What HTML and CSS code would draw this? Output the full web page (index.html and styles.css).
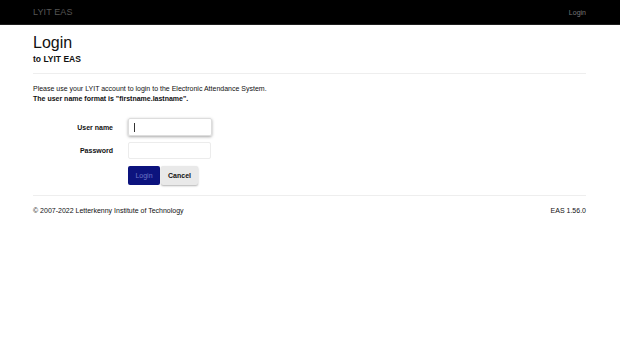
FILE: index.html
```html
<!DOCTYPE html>
<html>
<head>
<meta charset="utf-8">
<link rel="stylesheet" href="styles.css">
</head>
<body>
<nav class="navbar">
  <span class="brand">LYIT EAS</span>
  <span class="navlink">Login</span>
</nav>
<main class="container">
  <h1 class="title">Login</h1>
  <h2 class="subtitle">to LYIT EAS</h2>
  <hr class="rule">
  <p class="intro">Please use your LYIT account to login to the Electronic Attendance System.<br><b>The user name format is "firstname.lastname".</b></p>
  <form class="form">
    <div class="row">
      <label class="lbl">User name</label>
      <div class="input focus"><span class="caret"></span></div>
    </div>
    <div class="row">
      <label class="lbl">Password</label>
      <div class="input"></div>
    </div>
    <div class="row">
      <span class="lbl"></span>
      <div class="btns">
        <span class="btn primary">Login</span>
        <span class="btn secondary">Cancel</span>
      </div>
    </div>
  </form>
  <hr class="rule footrule">
  <footer class="footer">
    <span>© 2007-2022 Letterkenny Institute of Technology</span>
    <span>EAS 1.56.0</span>
  </footer>
</main>
</body>
</html>
```
FILE: styles.css
```css
html, body { margin: 0; padding: 0; background: #fff; }
body { font-family: "Liberation Sans", Arial, sans-serif; color: #222; width: 620px; height: 343px; overflow: hidden; }
.navbar { height: 24px; background: #000; border-bottom: 1px solid #1e1e1e; display: flex; align-items: center; justify-content: space-between; padding: 0 34px 0 33px; box-sizing: content-box; }
.brand { font-size: 9px; color: #555; letter-spacing: 0.1px; }
.navlink { font-size: 7px; color: #777; }
.container { margin: 0 34px 0 33px; }
.title { font-size: 16px; font-weight: normal; margin: 0; padding-top: 9px; line-height: 18px; color: #111; }
.subtitle { font-size: 8.5px; font-weight: bold; margin: 2px 0 0; line-height: 10px; color: #111; }
.rule { border: 0; border-top: 1px solid #eee; margin: 9px 0 0; }
.intro { font-size: 7px; line-height: 10px; margin: 10px 0 0; color: #111; }
.form { margin-top: 14px; display: flex; flex-direction: column; gap: 6px; }
.row { display: flex; align-items: center; }
.lbl { width: 80px; text-align: right; font-size: 7px; font-weight: bold; padding-right: 15px; color: #111; }
.input { width: 83px; height: 17px; border: 1px solid #ececec; border-radius: 2px; box-sizing: border-box; position: relative; }
.input.focus { width: 84px; height: 18px; border-color: #ddd; box-shadow: 0 1px 3px rgba(0,0,0,0.35); }
.caret { position: absolute; left: 5px; top: 4px; width: 1px; height: 9px; background: #333; }
.btns { display: flex; gap: 1px; margin-top: 1px; }
.btn { font-size: 7px; height: 19px; display: flex; align-items: center; justify-content: center; border-radius: 2px; }
.primary { width: 32px; background: #0c137e; color: #6d74c6; }
.secondary { width: 37px; background: #e9e9e9; color: #111; font-weight: bold; box-shadow: 0 1px 2px rgba(0,0,0,0.3); }
.footrule { margin-top: 10px; }
.footer { display: flex; justify-content: space-between; font-size: 7px; margin-top: 11px; color: #111; }
```
